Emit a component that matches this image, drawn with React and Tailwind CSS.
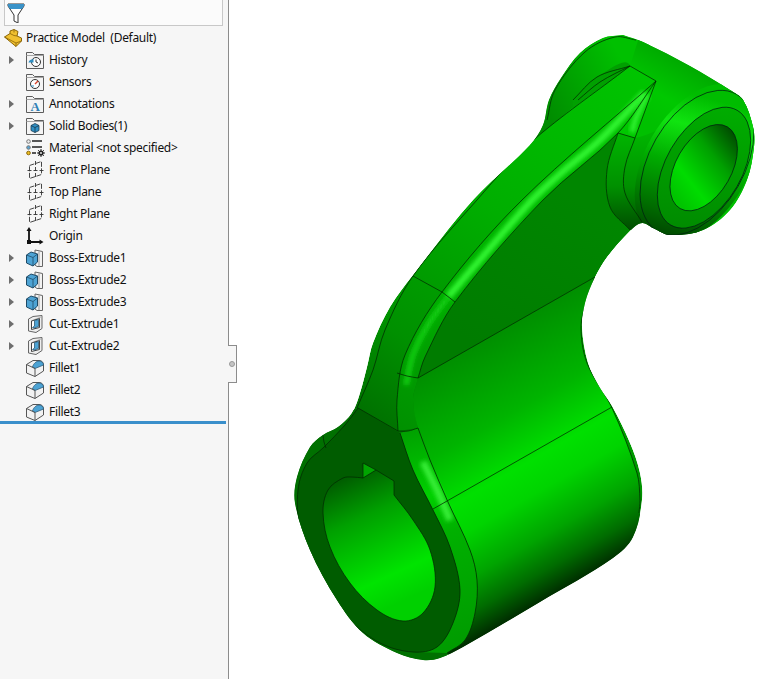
import React from "react";

// smooth line through each list of points, lists are joined with straight lines
function curve(...segs) {
  let d = "";
  const dir = (a, b) => {
    const l = Math.hypot(b[0] - a[0], b[1] - a[1]) || 1;
    return [(b[0] - a[0]) / l, (b[1] - a[1]) / l];
  };
  segs.forEach((p, s) => {
    d += (s === 0 ? "M" : "L") + p[0][0] + " " + p[0][1];
    for (let i = 0; i < p.length - 1; i++) {
      const b = p[i];
      const c = p[i + 1];
      const t1 = dir(p[i - 1] || b, c);
      const t2 = dir(b, p[i + 2] || c);
      const k = Math.hypot(c[0] - b[0], c[1] - b[1]) / 3;
      d += ` C${(b[0] + t1[0] * k).toFixed(1)} ${(b[1] + t1[1] * k).toFixed(1)} ${(c[0] - t2[0] * k).toFixed(1)} ${(c[1] - t2[1] * k).toFixed(1)} ${c[0]} ${c[1]}`;
    }
  });
  return d;
}

const silhouette = [
  [623, 35], [643, 42], [690, 66], [730, 90], [743, 100], [753, 127], [754, 147], [747, 180], [730, 210],
  [703, 230], [670, 235], [653, 228], [642, 223], [630, 231], [607, 257], [595, 277], [585, 303], [582, 327],
  [588, 363], [600, 388], [612, 406], [630, 443], [640, 473], [642, 500], [633, 537], [613, 558], [540, 602],
  [463, 647], [440, 658], [423, 660], [397, 653], [363, 633], [337, 600], [310, 550], [295, 503], [297, 477],
  [310, 447], [323, 435], [338, 427], [352, 413], [360, 393], [367, 367], [373, 343], [390, 307], [413, 275],
  [473, 200], [530, 145], [543, 125], [549, 100], [561, 78], [580, 53], [603, 38], [623, 35],
];
const topLine = [[630, 66], [530, 143], [477, 200], [413, 276], [385, 330], [373, 370], [357, 408]];
const filletOut = [[398, 431], [397, 400], [405, 355], [442, 292], [522, 200], [656, 81]];
const filletIn = [[418, 378], [425, 357], [455, 302], [543, 200], [618, 133], [656, 81]];
const lowerIn = [[418, 378], [413, 400], [418, 428], [430, 460], [448, 502], [470, 550], [477, 580], [475, 613], [465, 640], [447, 653]];
const faceEdge = [
  [358, 408], [345, 425], [323, 448], [307, 463], [298, 490], [300, 527], [320, 577], [347, 617], [380, 643],
  [413, 652], [437, 647], [453, 623], [460, 590], [450, 547], [433, 510], [413, 470], [400, 433],
];
const bore = [
  [363, 478], [352, 477], [343, 478], [328, 490], [323, 513], [330, 547], [350, 583], [377, 610], [403, 621],
  [423, 613], [435, 587], [430, 550], [413, 520], [394, 495],
];
const neck1 = [[618, 133], [607, 170], [610, 207], [630, 230]];
const neck2 = [[635, 138], [625, 167], [625, 193], [642, 222]];
const rightLine = [[595, 277], [586, 303], [581, 327], [587, 363], [612, 408], [637, 473], [640, 500], [639, 513]];
const rearLine = [[547, 120], [555, 90], [585, 52], [615, 37], [636, 40]];

function Part() {
  return (
    <svg viewBox="229 0 555 679" className="block h-[679px] w-full" fill="none">
      <defs>
        <clipPath id="sil"><path d={curve(silhouette)} /></clipPath>
        <filter id="soft" x="-20%" y="-20%" width="140%" height="140%"><feGaussianBlur stdDeviation="2" /></filter>
        <linearGradient id="base" gradientUnits="userSpaceOnUse" x1="620" y1="60" x2="360" y2="415">
          <stop offset="0" stopColor="#00c400" />
          <stop offset="0.45" stopColor="#00ae00" />
          <stop offset="0.8" stopColor="#009000" />
          <stop offset="1" stopColor="#007000" />
        </linearGradient>
        <linearGradient id="rear" gradientUnits="userSpaceOnUse" x1="545" y1="110" x2="625" y2="65">
          <stop offset="0" stopColor="#008c00" />
          <stop offset="1" stopColor="#00c000" />
        </linearGradient>
        <linearGradient id="top" gradientUnits="userSpaceOnUse" x1="690" y1="62" x2="655" y2="125">
          <stop offset="0" stopColor="#00a800" />
          <stop offset="0.6" stopColor="#00c800" />
          <stop offset="1" stopColor="#00c000" />
        </linearGradient>
        <linearGradient id="surf" gradientUnits="userSpaceOnUse" x1="505" y1="328" x2="632" y2="550">
          <stop offset="0" stopColor="#008f00" />
          <stop offset="0.3" stopColor="#00b400" />
          <stop offset="0.5" stopColor="#00e000" />
          <stop offset="0.62" stopColor="#00d400" />
          <stop offset="0.78" stopColor="#00a400" />
          <stop offset="0.9" stopColor="#006c00" />
          <stop offset="0.97" stopColor="#004000" />
          <stop offset="1" stopColor="#002c00" />
        </linearGradient>
        <linearGradient id="web" gradientUnits="userSpaceOnUse" x1="560" y1="190" x2="470" y2="340">
          <stop offset="0" stopColor="#008600" />
          <stop offset="1" stopColor="#007c00" />
        </linearGradient>
        <linearGradient id="neck" gradientUnits="userSpaceOnUse" x1="625" y1="135" x2="625" y2="228">
          <stop offset="0" stopColor="#00b400" />
          <stop offset="0.55" stopColor="#009000" />
          <stop offset="1" stopColor="#005000" />
        </linearGradient>
        <linearGradient id="fillet" gradientUnits="userSpaceOnUse" x1="620" y1="110" x2="400" y2="430">
          <stop offset="0" stopColor="#00c000" />
          <stop offset="0.6" stopColor="#00b000" />
          <stop offset="1" stopColor="#009000" />
        </linearGradient>
        <linearGradient id="low" gradientUnits="userSpaceOnUse" x1="405" y1="430" x2="470" y2="640">
          <stop offset="0" stopColor="#00a000" />
          <stop offset="0.32" stopColor="#00d000" />
          <stop offset="0.5" stopColor="#00b000" />
          <stop offset="1" stopColor="#009c00" />
        </linearGradient>
        <linearGradient id="hub" gradientUnits="userSpaceOnUse" x1="660" y1="105" x2="695" y2="240">
          <stop offset="0" stopColor="#00bc00" />
          <stop offset="0.22" stopColor="#10e410" />
          <stop offset="0.5" stopColor="#00ac00" />
          <stop offset="0.85" stopColor="#006c00" />
          <stop offset="1" stopColor="#004e00" />
        </linearGradient>
        <linearGradient id="ring" gradientUnits="userSpaceOnUse" x1="680" y1="110" x2="725" y2="225">
          <stop offset="0" stopColor="#00ac00" />
          <stop offset="1" stopColor="#008c00" />
        </linearGradient>
        <linearGradient id="hole" gradientUnits="userSpaceOnUse" x1="722" y1="126" x2="690" y2="206">
          <stop offset="0" stopColor="#004c00" />
          <stop offset="0.35" stopColor="#00a000" />
          <stop offset="0.75" stopColor="#00dc00" />
          <stop offset="1" stopColor="#00c400" />
        </linearGradient>
        <linearGradient id="boreFill" gradientUnits="userSpaceOnUse" x1="345" y1="470" x2="405" y2="600">
          <stop offset="0" stopColor="#005200" />
          <stop offset="0.35" stopColor="#00a000" />
          <stop offset="0.8" stopColor="#00e400" />
          <stop offset="1" stopColor="#00d000" />
        </linearGradient>
      </defs>

      <g clipPath="url(#sil)">
        <path d={curve(silhouette)} fill="url(#base)" />
        {/* rear disc and top of the hub */}
        <path d={curve([[530, 145], [547, 100], [580, 50], [623, 30], [650, 40]], [[650, 75], [630, 66], [530, 143]])} fill="url(#rear)" />
        <path d={curve([[573, 100], [597, 77], [630, 66], [600, 88], [573, 108]])} fill="#00a000" />
        <path d="M630 66 L640 34 L770 100 L770 250 L642 223 L635 138 L656 81 Z" fill="url(#top)" />

        {/* web, fillets, rim */}
        <path d={curve(topLine, filletOut) + " Z"} fill="url(#base)" />
        <path d={curve(filletIn.slice(0, 5), neck1, [[630, 230], [607, 257], [595, 277]]) + " Z"} fill="url(#web)" />
        <path d={curve(filletOut, [...filletIn].reverse(), lowerIn.slice(0, 3)) + " Z"} fill="url(#fillet)" />
        <path d={curve([[645, 93], [600, 140], [560, 174], [532, 200], [478, 262], [448, 297]])} stroke="#30f530" strokeWidth="7" filter="url(#soft)" />
        <path d={curve([[448, 297], [428, 325], [413, 355], [406, 385]])} stroke="#14d014" strokeWidth="5" filter="url(#soft)" />
        <path d="M656 81 L618 133 L635 138 Z" fill="#00c800" />
        <path d={curve([[648, 94], [636, 118], [632, 132]])} stroke="#34f534" strokeWidth="5" filter="url(#soft)" />
        <path d={curve(neck1, [[700, 240], [690, 130], [635, 138]]) + " Z"} fill="url(#neck)" />

        {/* lower sheet, runs out under the right edge */}
        <path
          d={curve(
            [[418, 378], [595, 277]],
            rightLine.slice(1),
            [[660, 530], [640, 575], [463, 670], [447, 653]],
            [...lowerIn].reverse(),
          ) + " Z"}
          fill="url(#surf)"
        />
        {/* rim round the front face */}
        <path d="M358 408 L280 440 L280 680 L447 680 L447 653 L413 652 Z" fill="#007000" />
        <path d={curve(lowerIn.slice(2), [[447, 653], [413, 652]], faceEdge.slice(9)) + " Z"} fill="url(#low)" />
        <path d={curve([[423, 462], [438, 492], [450, 520]])} stroke="#38ee38" strokeWidth="7" filter="url(#soft)" />

        {/* front face and bore */}
        <path d={curve(faceEdge) + " Z"} fill="#005c00" />
        <path d={curve(bore, [[394, 481], [376, 470], [363, 463], [363, 478]]) + " Z"} fill="url(#boreFill)" />
        <path d="M363 463 L376 470 L363 478 Z" fill="#00a400" />

        {/* hub at the far end */}
        <ellipse cx="697" cy="162.7" rx="52" ry="86" transform="rotate(30 697 162.7)" fill="url(#hub)" />
        <ellipse cx="697" cy="162.7" rx="47.4" ry="79" transform="rotate(30 697 162.7)" fill="url(#hub)" stroke="#021" strokeWidth="0.7" />
        <ellipse cx="704" cy="167.7" rx="38" ry="66.3" transform="rotate(30 704 167.7)" fill="url(#ring)" stroke="#021" strokeWidth="0.7" />
        <ellipse cx="703.7" cy="167.7" rx="27.8" ry="47.2" transform="rotate(30 703.7 167.7)" fill="url(#hole)" stroke="#021" strokeWidth="0.7" />

        {/* edges */}
        <g stroke="#022b02" strokeWidth="0.75">
          <path d={curve(topLine)} />
          <path d={curve(rearLine)} />
          <path d={curve([[573, 100], [597, 77], [630, 66]])} />
          <path d={curve([[578, 100], [600, 82], [630, 66]])} />
          <path d="M630 66 L656 81" />
          <path d={curve(filletOut)} />
          <path d={curve(filletIn)} />
          <path d="M618 133 L635 138 L656 81" />
          <path d={curve(neck1)} />
          <path d={curve(neck2)} />
          <path d="M413 276 L442 292 L455 302" />
          <path d={curve([[397, 373], [407, 376], [418, 378]])} />
          <path d="M418 378 L595 277" />
          <path d={curve(rightLine)} />
          <path d="M433 509 L612 407" />
          <path d={curve(lowerIn.slice(2))} />
          <path d={curve(faceEdge)} />
          <path d="M358 408 L398 431" />
          <path d={curve([[398, 431], [408, 431], [418, 428]])} />
          <path d={curve([[323, 435], [324, 442], [326, 448]])} />
          <path d={curve(bore)} />
          <path d="M363 478 L363 463 L376 470 L394 481 L394 495" />
          <path d="M363 478 L376 470" />
        </g>
      </g>
    </svg>
  );
}

const Folder = ({ children }) => (
  <svg viewBox="0 0 18 18" className="h-[18px] w-[18px]">
    <path d="M.5 17.500V1.500h6l2 2h9v14z" fill="#f4f4f4" stroke="#5c5c5c" />
    <path d="M.5 4.500h17" stroke="#a5a5a5" />
    {children}
  </svg>
);

const icons = {
  root: (
    <svg viewBox="0 0 18 18" className="h-[18px] w-[18px]">
      <path d="M.5 8L6 4.500V2L10 .5l4 2-1 4.500 4.500 2v3L12 17.500z" fill="#f0c030" stroke="#8a6508" strokeLinejoin="round" />
      <path d="M6 4.500l4 2 3 .5M10 .5v3M.5 8L12 14v3.500M12 14l5.500-2" fill="none" stroke="#8a6508" strokeWidth="0.8" />
    </svg>
  ),
  history: (
    <Folder>
      <circle cx="10" cy="11" r="4.500" fill="#fff" stroke="#333" />
      <path d="M10 8.500V11l2 1" fill="none" stroke="#333" />
      <path d="M2.500 11.500a4 4 0 0 1 4-3l1-1v4H4z" fill="#2f8fc4" />
    </Folder>
  ),
  sensors: (
    <Folder>
      <circle cx="9" cy="11" r="4.500" fill="#fff" stroke="#333" />
      <path d="M9 11l3-3" stroke="#d8452e" strokeWidth="1.500" />
      <path d="M5 13h3" stroke="#2f8fc4" />
    </Folder>
  ),
  annotations: (
    <Folder>
      <text x="9" y="15.500" textAnchor="middle" fontFamily="'Liberation Serif', serif" fontWeight="700" fontSize="13" fill="#2f7fb5">A</text>
    </Folder>
  ),
  bodies: (
    <Folder>
      <path d="M9 6.500l4 2v5l-4 2-4-2v-5z" fill="#2f8fc4" stroke="#17374d" strokeWidth="0.8" />
      <path d="M5 8.500l4 2 4-2M9 10.500v5" fill="none" stroke="#17374d" strokeWidth="0.8" />
    </Folder>
  ),
  material: (
    <svg viewBox="0 0 20 18" className="h-[18px] w-[20px]">
      <circle cx="2.500" cy="2.500" r="1.800" fill="#eee" stroke="#777" />
      <circle cx="2.500" cy="8.500" r="1.800" fill="#5aa4d2" stroke="#777" />
      <circle cx="2.500" cy="14" r="1.800" fill="#f0c020" stroke="#8a6508" />
      <path d="M6 2h10M6 8h10M6 14h4" stroke="#222" strokeWidth="1.600" />
      <circle cx="15" cy="14" r="2.600" fill="#222" />
      <path d="M15 10v8M11 14h8M12.200 11.200l5.600 5.600M17.800 11.200l-5.600 5.600" stroke="#222" />
      <circle cx="15" cy="14" r="0.9" fill="#fff" />
    </svg>
  ),
  plane: (
    <svg viewBox="0 0 18 18" className="h-[18px] w-[18px]">
      <path d="M3.500 4.500L15.500 .5v13l-12 4z" fill="none" stroke="#333" strokeWidth="0.9" strokeDasharray="5 1.500" />
      <path d="M9.500 0v18M1.500 9.500h16" stroke="#333" strokeWidth="0.9" strokeDasharray="4 2" />
    </svg>
  ),
  origin: (
    <svg viewBox="0 0 18 18" className="h-[18px] w-[18px]">
      <path d="M3 2v13h12" fill="none" stroke="#111" strokeWidth="1.800" />
      <path d="M3 0l-2.500 4h5zM17.500 15l-4-2.500v5z" fill="#111" />
      <rect x="1" y="13" width="4" height="4" fill="#111" />
    </svg>
  ),
  boss: (
    <svg viewBox="0 0 18 18" className="h-[18px] w-[18px]">
      <path d="M9 1l7.500 1.500V17.500H11L9 16z" fill="#f2f2f2" stroke="#666" />
      <path d="M13 2.500V17" stroke="#999" />
      <path d="M.5 6L5 3l6.500 2v8L7 17l-6.500-3z" fill="#4da3d4" stroke="#1e4a66" />
      <path d="M.5 6L7 8.500 11.500 5M7 8.500V17" fill="none" stroke="#1e4a66" strokeWidth="0.8" />
    </svg>
  ),
  cut: (
    <svg viewBox="0 0 18 18" className="h-[18px] w-[18px]">
      <path d="M2.500 4L7 1.500 16 .5v13l-6 4-7.500-1.500z" fill="#eeeeee" stroke="#666" />
      <path d="M5 6l10-4" stroke="#aaa" strokeWidth="0.8" />
      <path d="M5.500 6l8-2.500v9l-8 2z" fill="#fff" stroke="#444" />
      <path d="M8.500 5.500l4-1v7l-4 1.500-2-.5 2-1.500z" fill="#4da3d4" stroke="#1e4a66" strokeWidth="0.7" />
    </svg>
  ),
  fillet: (
    <svg viewBox="0 0 18 18" className="h-[18px] w-[18px]">
      <path d="M.5 5.500L7 1.500h6C16 1.500 17.500 3.500 17.500 6v6L9 17.500.5 14z" fill="#f2f2f2" stroke="#555" />
      <path d="M6.500 8C7.500 4.500 10.500 2 13 2c2.800 0 4.500 2 4.500 4L9 9.500z" fill="#4da3d4" stroke="#2c5a78" strokeWidth="0.8" />
      <path d="M.5 5.500L9 9.500v8" fill="none" stroke="#555" />
    </svg>
  ),
};

const rows = [
  { name: "History", icon: "history", arrow: true },
  { name: "Sensors", icon: "sensors" },
  { name: "Annotations", icon: "annotations", arrow: true },
  { name: "Solid Bodies(1)", icon: "bodies", arrow: true },
  { name: "Material <not specified>", icon: "material" },
  { name: "Front Plane", icon: "plane" },
  { name: "Top Plane", icon: "plane" },
  { name: "Right Plane", icon: "plane" },
  { name: "Origin", icon: "origin" },
  { name: "Boss-Extrude1", icon: "boss", arrow: true },
  { name: "Boss-Extrude2", icon: "boss", arrow: true },
  { name: "Boss-Extrude3", icon: "boss", arrow: true },
  { name: "Cut-Extrude1", icon: "cut", arrow: true },
  { name: "Cut-Extrude2", icon: "cut", arrow: true },
  { name: "Fillet1", icon: "fillet" },
  { name: "Fillet2", icon: "fillet" },
  { name: "Fillet3", icon: "fillet" },
];

export default function App() {
  return (
    <div className="relative flex h-[679px] w-full overflow-hidden bg-white font-['Noto_Sans',sans-serif] text-[12px] tracking-[-0.3px] text-[#111]">
      <aside className="w-[229px] shrink-0 border-r border-[#8c8c8c] bg-[#f6f6f6]">
        <div className="ml-1 flex h-[26px] w-[219px] items-center border border-t-0 border-[#c8c8c8] bg-[#fbfbfb] pl-0.5">
          <svg viewBox="0 0 18 20" className="h-[20px] w-[18px]">
            <path d="M1 1h16v2l-6 9v8l-4-2v-6L1 3z" fill="#fff" stroke="#333" strokeLinejoin="round" />
            <path d="M1 1h16v2l-2 3H3L1 3z" fill="#3a93c9" />
          </svg>
        </div>
        <div className="mt-px flex h-[22px] items-center pl-[4px]">
          <span className="w-[22px]">{icons.root}</span>
          <span className="whitespace-pre">Practice Model  (Default)</span>
        </div>
        {rows.map((row) => (
          <div key={row.name} className="flex h-[22px] items-center">
            <span className="flex w-[26px] justify-center pr-[4px]">
              {row.arrow && (
                <svg viewBox="0 0 5 8" className="h-[8px] w-[5px]">
                  <path d="M0 0l5 4-5 4z" fill="#6e6e6e" />
                </svg>
              )}
            </span>
            <span className="w-[23px]">{icons[row.icon]}</span>
            <span>{row.name}</span>
          </div>
        ))}
        <div className="-mt-[2px] h-[3px] w-[226px] bg-[#3a8fcb]" />
      </aside>

      <main className="min-w-0 flex-1">
        <Part />
      </main>

      {/* drag handle sits over the panel border */}
      <div className="absolute left-[228px] top-[345px] flex h-[38px] w-[9px] items-center justify-center border border-l-0 border-[#8c8c8c] bg-[#f6f6f6]">
        <div className="h-[6px] w-[6px] rounded-full border border-[#9a9a9a] bg-[#c4c4c4]" />
      </div>
    </div>
  );
}
